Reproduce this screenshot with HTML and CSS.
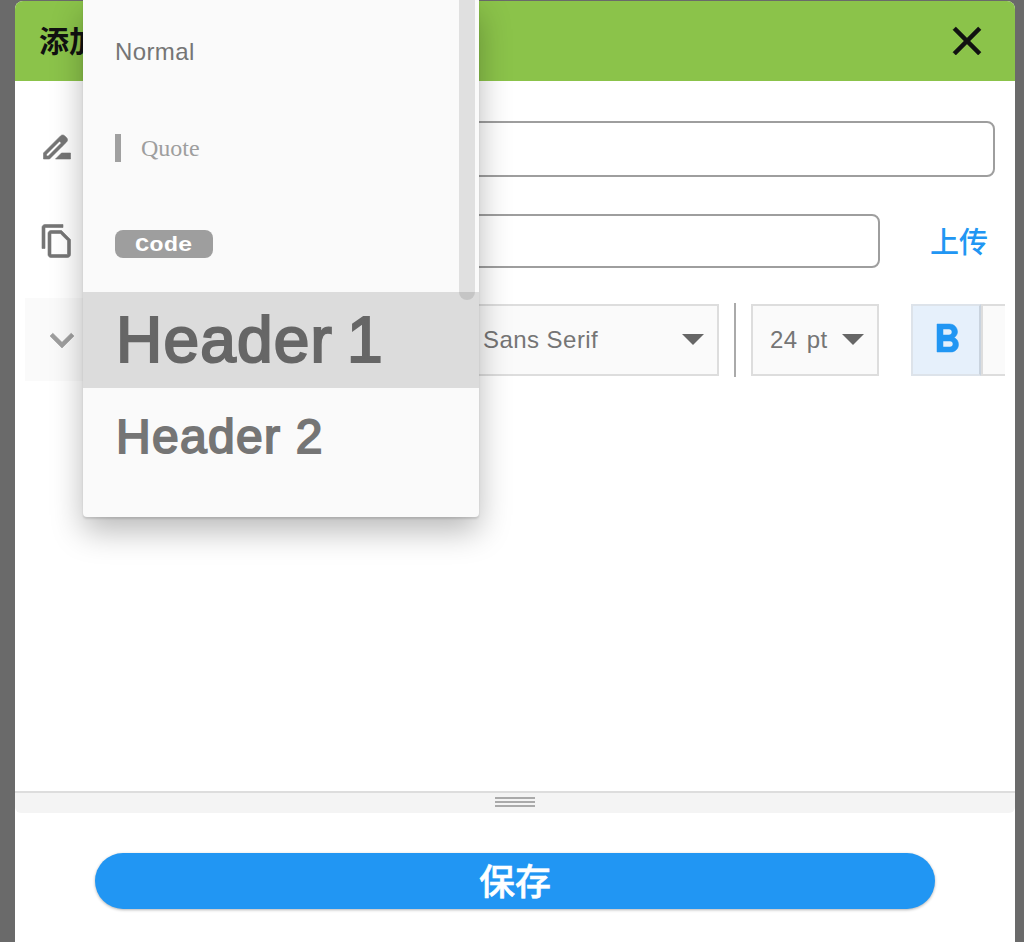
FILE: index.html
```html
<!DOCTYPE html>
<html lang="zh">
<head>
<meta charset="utf-8">
<title>添加</title>
<link rel="stylesheet" href="styles.css">
</head>
<body>
<div class="dialog">
  <header class="head">
    <h1 class="title">添加</h1>
    <svg class="close" viewBox="0 0 24 24"><path d="M19 6.41L17.59 5 12 10.59 6.41 5 5 6.41 10.59 12 5 17.59 6.41 19 12 13.41 17.59 19 19 17.59 13.41 12z"/></svg>
  </header>
  <div class="row row-title">
    <svg class="field-icon" viewBox="0 0 24 24"><path d="M18.41 5.8L17.2 4.59c-.78-.78-2.05-.78-2.83 0l-2.68 2.68L3 15.96V20h4.04l8.74-8.74 2.63-2.63c.79-.78.79-2.05 0-2.83zM6.21 18H5v-1.21l8.66-8.66 1.21 1.21L6.21 18zM11 20l4-4h6v4H11z"/></svg>
    <div class="input"></div>
  </div>
  <div class="row row-file">
    <svg class="field-icon" viewBox="0 0 24 24"><path fill-rule="evenodd" d="M16 1H4c-1.1 0-2 .9-2 2v14h2V3h12V1zm-1 4H8c-1.1 0-1.99.9-1.99 2L6 21c0 1.1.89 2 1.99 2H19c1.1 0 2-.9 2-2V11l-6-6zM8 21V7h6.2L19 11.8V21H8z"/></svg>
    <div class="input"></div>
    <span class="upload">上传</span>
  </div>
  <div class="toolbar">
    <div class="more"><svg class="ico48 grey" viewBox="0 0 24 24"><path d="M16.59 8.59L12 13.17 7.41 8.59 6 10l6 6 6-6z"/></svg></div>
    <div class="select sel-heading"><i class="caret"></i></div>
    <div class="select sel-font"><span>Sans Serif</span><i class="caret"></i></div>
    <div class="sep"></div>
    <div class="select sel-size"><span>24 pt</span><i class="caret"></i></div>
    <div class="tool active"><svg class="ico48 blue" viewBox="0 0 24 24"><path fill-rule="evenodd" d="M15.6 10.79c.97-.67 1.65-1.77 1.65-2.79 0-2.26-1.75-4-4-4H7v14h7.04c2.09 0 3.71-1.7 3.71-3.79 0-1.52-.86-2.82-2.15-3.42zM10 6.5h3c.83 0 1.5.67 1.5 1.5s-.67 1.5-1.5 1.5h-3v-3zm3.5 9H10v-3h3.5c.83 0 1.5.67 1.5 1.5s-.67 1.5-1.5 1.5z"/></svg></div>
    <div class="tool"><svg class="ico48 dark" viewBox="0 0 24 24"><path d="M10 4v3h2.21l-3.42 8H6v3h8v-3h-2.21l3.42-8H18V4z"/></svg></div>
  </div>
  <div class="editor"></div>
  <div class="resize"><span></span><span></span><span></span></div>
  <div class="foot"><button class="save">保存</button></div>

  <div class="menu">
    <div class="item normal">Normal</div>
    <div class="item"><span class="quote">Quote</span></div>
    <div class="item"><span class="code"><span class="code-text">Code</span></span></div>
    <div class="item h1 current">Header 1</div>
    <div class="item h2">Header 2</div>
    <div class="thumb"></div>
  </div>
</div>
</body>
</html>
```
FILE: styles.css
```css
* { box-sizing: border-box; }
html, body { margin: 0; height: 942px; overflow: hidden; }
body {
  background: #6a6a6a;
  font-family: "Liberation Sans", "Noto Sans CJK SC", sans-serif;
  color: #666;
}
.dialog {
  position: relative;
  display: flex;
  flex-direction: column;
  width: 1000px;
  height: 941px;
  margin: 1px 0 0 15px;
  background: #fff;
  border-radius: 8px 8px 0 0;
}
.head {
  flex: none;
  display: flex;
  align-items: center;
  justify-content: space-between;
  height: 80px;
  padding: 0 24px;
  background: #8bc34a;
  border-radius: 8px 8px 0 0;
}
.title {
  margin: -4px 0 0;
  font-size: 30px;
  font-weight: 700;
  color: #111;
  font-family: "Noto Sans CJK SC", sans-serif;
}
.close { width: 48px; height: 48px; fill: #111; stroke: #111; stroke-width: .3; margin-top: -1px; }
.row { display: flex; align-items: center; flex: none; padding-left: 24px; }
.row-title { margin-top: 40px; height: 56px; padding-right: 20px; }
.row-file { margin-top: 37px; height: 54px; padding-right: 25px; }
.field-icon { flex: none; width: 36px; height: 36px; fill: #757575; stroke: #757575; stroke-width: .4; margin-top: -4px; }
.row-file .field-icon { margin-top: 0; }
.input {
  flex: 1;
  height: 100%;
  margin-left: 11px;
  border: 2px solid #9e9e9e;
  border-radius: 8px;
}
.upload {
  flex: none;
  width: 60px;
  margin: -3px 0 0 50px;
  font-size: 29px;
  font-weight: 500;
  color: #2196f3;
  font-family: "Noto Sans CJK SC", sans-serif;
}
.toolbar {
  flex: none;
  display: flex;
  align-items: center;
  width: 980px;
  height: 83px;
  margin: 30px 0 0 10px;
  overflow: hidden;
}
.more {
  flex: none;
  display: flex;
  align-items: center;
  justify-content: center;
  width: 74px;
  height: 83px;
  background: #fafafa;
}
.ico48 { width: 48px; height: 48px; flex: none; }
.grey { fill: #9e9e9e; stroke: #9e9e9e; stroke-width: .3; }
.blue { fill: #2196f3; stroke: #2196f3; stroke-width: .25; margin-left: 2px; }
.dark { fill: #aaa; margin-left: 2px; }
.select {
  flex: none;
  display: flex;
  align-items: center;
  justify-content: space-between;
  height: 72px;
  padding: 0 13px 0 16px;
  background: #fafafa;
  border: 2px solid #ddd;
  font-size: 24px;
  letter-spacing: .45px;
  color: #757575;
}
.sel-heading { width: 336px; margin-left: 14px; }
.sel-font { width: 254px; margin-left: 16px; }
.sel-size { width: 128px; margin-left: 15px; padding-left: 17px; word-spacing: 2px; }
.caret {
  flex: none;
  width: 0;
  height: 0;
  border-left: 11px solid transparent;
  border-right: 11px solid transparent;
  border-top: 11px solid #666;
}
.sep { flex: none; width: 2px; height: 74px; margin-left: 15px; background: #aaa; }
.tool {
  flex: none;
  display: flex;
  align-items: center;
  justify-content: center;
  width: 70px;
  height: 72px;
  background: #fafafa;
  border: 2px solid #ddd;
}
.tool.active { margin-left: 32px; background: #e6f0fb; border-color: #dde3ea; border-right-color: #c9d3de; }
.editor { flex: 1; }
.resize {
  flex: none;
  display: flex;
  flex-direction: column;
  align-items: center;
  gap: 2px;
  height: 22px;
  padding-top: 4px;
  background: #f4f4f4;
  border-top: 2px solid #ddd;
  border-radius: 0 0 6px 6px;
}
.resize span { flex: none; width: 40px; height: 2px; background: #aaa; }
.foot { flex: none; height: 129px; padding: 40px 80px 0; }
.save {
  display: block;
  width: 100%;
  height: 56px;
  padding: 0 0 5px;
  border: 0;
  border-radius: 28px;
  background: #2196f3;
  color: #fff;
  font-size: 36px;
  font-weight: 500;
  -webkit-text-stroke: .5px #fff;
  font-family: "Noto Sans CJK SC", sans-serif;
  box-shadow: 0 1px 3px rgba(0, 0, 0, .3);
}
.menu {
  position: absolute;
  left: 68px;
  top: -1px;
  width: 396px;
  height: 517px;
  display: flex;
  flex-direction: column;
  justify-content: flex-end;
  padding-bottom: 33px;
  background: #fafafa;
  border-radius: 0 0 4px 4px;
  box-shadow: 0 2px 2px rgba(0, 0, 0, .12), 0 14px 32px rgba(0, 0, 0, .28);
}
.item {
  flex: none;
  display: flex;
  align-items: center;
  height: 96px;
  padding-left: 32px;
  font-size: 24px;
  color: #757575;
}
.normal { letter-spacing: .4px; }
.quote {
  padding-left: 20px;
  border-left: 6px solid #a0a0a0;
  line-height: 28px;
  font-family: "Liberation Serif", serif;
  color: #9e9e9e;
}
.code {
  width: 98px;
  padding: 3px 0 0 20px;
  height: 28px;
  line-height: 26px;
  border-radius: 8px;
  background: #9e9e9e;
  color: #fff;
  font-family: "Liberation Mono", monospace;
  font-size: 21px;
  font-weight: 700;
}
.code-text { display: inline-block; transform: scaleX(1.14); transform-origin: left center; }
.h1 { font-size: 64px; color: #666; -webkit-text-stroke: 2.2px #666; padding-left: 33px; letter-spacing: 1.2px; word-spacing: -5px; }
.h2 { font-size: 48px; color: #757575; -webkit-text-stroke: 1.9px #757575; padding-left: 33px; letter-spacing: 1.3px; }
.current { background: #dcdcdc; }
.thumb {
  position: absolute;
  right: 4px;
  top: 0;
  width: 16px;
  height: 300px;
  background: rgba(0, 0, 0, .1);
  border-radius: 0 0 8px 8px;
}
```
